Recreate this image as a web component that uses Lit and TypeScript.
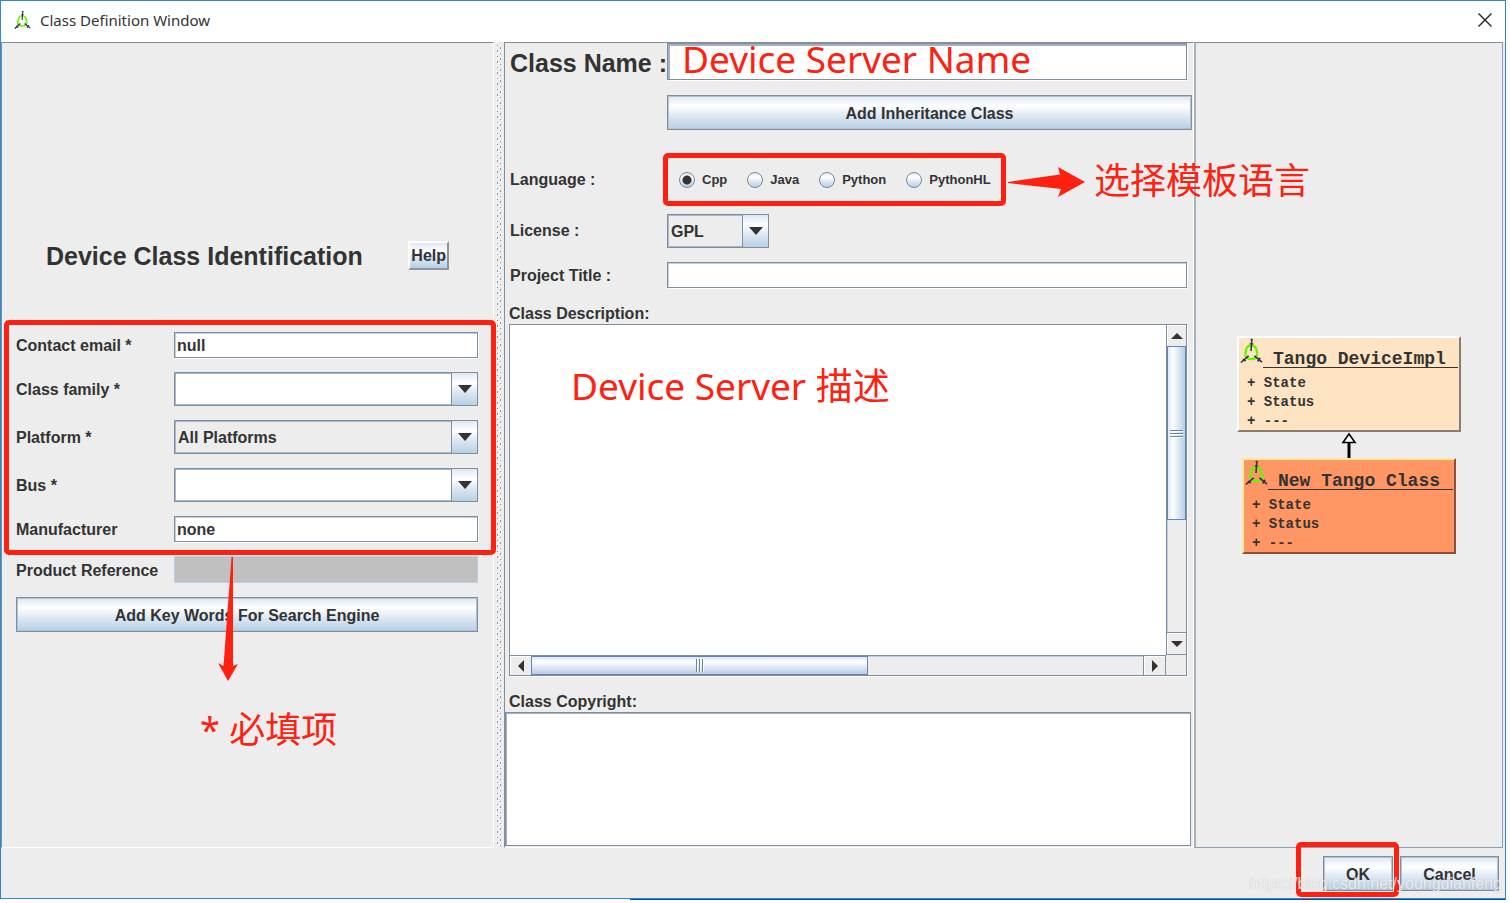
import { LitElement, html, css, svg } from "lit";
import { customElement, property } from "lit/decorators.js";

const tangoMark = svg`
  <path d="M5.5 16.5 C6 9.5 9 7 11.5 7 C14.5 7 17.5 9.5 18 15.5 C18 20 15 21.5 11.5 21.5 C8 21.5 5.5 20 5.5 16.5Z"
    fill="none" stroke="#66f505" stroke-width="2.4" />
  <path d="M11 1 L12.5 1 L12 5 L11.5 13" fill="none" stroke="#333344" stroke-width="1.6" />
  <path d="M10 5.5 H14" stroke="#333344" stroke-width="1" />
  <path d="M9 18 L1 25 M3 21.5 L6 23.5 M15 18 L23 24.5 M21 20 L18.5 24" fill="none" stroke="#3a2a4a" stroke-width="1.7" />`;

@customElement("tango-icon")
class TangoIcon extends LitElement {
  static styles = css`
    :host { display: block; }
    .mark { display: block; width: 100%; height: 100%; }
  `;
  render() {
    return html`<svg class="mark" viewBox="0 0 24 26" aria-hidden="true">${tangoMark}</svg>`;
  }
}

@customElement("combo-box")
class ComboBox extends LitElement {
  @property() name = "";
  @property() value = "";
  @property({ type: Boolean }) editable = false;

  static styles = css`
    :host { display: block; }
    .combo { position: relative; height: 34px; }
    .select {
      box-sizing: border-box;
      width: 100%;
      height: 100%;
      margin: 0;
      padding: 2px 30px 0 3px;
      appearance: none;
      border: 1px solid #7f8f9f;
      border-radius: 0;
      box-shadow: inset 0 0 0 1px #a3b8cc;
      background: #ededed;
      color: #333;
      font: bold 16px/20px "Liberation Sans", sans-serif;
      outline: none;
    }
    .editable { background: #fff; }
    .arrow {
      position: absolute;
      top: 1px;
      right: 1px;
      bottom: 1px;
      width: 25px;
      display: flex;
      align-items: center;
      justify-content: center;
      border-left: 1px solid #7f8f9f;
      background: linear-gradient(#dde8f3, #fff 30%, #dde8f3 60%, #b8cfe5);
      pointer-events: none;
    }
  `;
  render() {
    return html`<div class="combo">
      <select class="select ${this.editable ? "editable" : ""}" aria-label=${this.name}>
        <option>${this.value}</option>
      </select>
      <span class="arrow"><svg width="14" height="8" viewBox="0 0 14 8"><path d="M0 0H14L7 8Z" fill="#333" /></svg></span>
    </div>`;
  }
}

@customElement("class-card")
class ClassCard extends LitElement {
  @property() name = "";
  @property({ type: Boolean }) fresh = false;

  static styles = css`
    :host { display: block; }
    .card {
      box-sizing: border-box;
      height: 96px;
      padding: 0 1px 0 1px;
      border: 2px solid;
      border-color: #fff #8a7c70 #8a7c70 #fff;
      background: #ffe4c4;
      color: #333;
      font: bold 14px/19px "Liberation Mono", monospace;
    }
    .fresh { background: #ff9664; border-color: #ffe9a0 #8c5238 #8c5238 #ffe9a0; }
    .head { display: flex; align-items: flex-end; height: 30px; }
    .icon { width: 23px; height: 26px; align-self: flex-start; }
    .name {
      flex: 1;
      margin: 0;
      padding: 0 10px;
      border-bottom: 1px solid #333;
      font: bold 18px/16px "Liberation Mono", monospace;
      white-space: nowrap;
    }
    .list { margin: 6px 0 0; padding: 0 0 0 7px; list-style: none; }
  `;
  render() {
    return html`<article class="card ${this.fresh ? "fresh" : ""}">
      <div class="head"><tango-icon class="icon"></tango-icon><h3 class="name">${this.name}</h3></div>
      <ul class="list"><li>+ State</li><li>+ Status</li><li>+ ---</li></ul>
    </article>`;
  }
}

@customElement("app-root")
class AppRoot extends LitElement {
  static styles = css`
    :host {
      display: block;
      color: #333;
      font: bold 16px/20px "Liberation Sans", Arial, sans-serif;
    }
    .page {
      box-sizing: border-box;
      display: flex;
      flex-direction: column;
      min-height: 100vh;
      padding: 0 4px 4px 0;
      background: linear-gradient(#0b4f94, #0b4f94) right 4px bottom 3px / 58% 1px no-repeat #fff;
      overflow: hidden;
    }
    .window {
      flex: 1;
      display: flex;
      flex-direction: column;
      border: 1px solid #2b87d8;
      background: #ededed;
    }
    .titlebar {
      box-sizing: border-box;
      display: flex;
      align-items: center;
      height: 41px;
      padding: 0 13px 3px;
      background: #fff;
    }
    .app-icon { width: 17px; height: 20px; margin-right: 9px; }
    .caption { flex: 1; margin: 0; font: 15px/20px "Noto Sans", sans-serif; }
    .close { display: block; padding: 0; border: 0; background: none; line-height: 0; }
    .body {
      flex: 1;
      display: grid;
      grid-template-columns: minmax(0, 493fr) 10px minmax(0, 690fr) minmax(0, 311fr);
    }
    .pane {
      box-sizing: border-box;
      border: 1px solid;
      border-color: #7f8f9f #fff #fff #7f8f9f;
    }

    .identity { padding: 198px 15px 0 14px; }
    .heading-row { display: flex; align-items: center; height: 29px; margin-bottom: 62px; padding: 0 29px 0 30px; }
    .heading { flex: 1; margin: 0; font-size: 25px; line-height: 30px; white-space: nowrap; }
    .button {
      box-sizing: border-box;
      height: 35px;
      margin: 0;
      padding: 2px 4px 0;
      border: 1px solid #7f8f9f;
      border-radius: 0;
      box-shadow: inset 0 0 0 1px #b4c3d2;
      background: linear-gradient(#dde8f3, #fff 30%, #dde8f3 60%, #b8cfe5);
      color: #333;
      font: inherit;
    }
    .help {
      height: 29px;
      padding: 0 1px;
      border: 2px solid;
      border-color: #fff #8c96a0 #8c96a0 #fff;
      box-shadow: none;
    }
    .required, .optional {
      display: grid;
      grid-template-columns: 158px minmax(0, 1fr);
      align-items: center;
      row-gap: 14px;
    }
    .label { padding-top: 2px; }
    .required { position: relative; }
    .optional { margin: 14px 0; }
    .input {
      box-sizing: border-box;
      width: 100%;
      height: 26px;
      margin: 0;
      padding: 2px 2px 0;
      border: 1px solid #7f8f9f;
      border-radius: 0;
      box-shadow: 1px 1px 0 #fff, inset 1px 1px 0 #c5cfd9;
      background: #fff;
      color: #333;
      font: inherit;
      outline: none;
    }
    .disabled { height: 27px; border-color: #b8cfe5; box-shadow: none; background: #c0c0c0; }
    .wide { width: 100%; }

    .frame {
      position: absolute;
      box-sizing: border-box;
      border: 5px solid #ff2010;
      border-radius: 5px;
      pointer-events: none;
    }
    .frame-required { inset: -12px -18px -13px -12px; }
    .note {
      position: absolute;
      margin: 0;
      color: #ff2010;
      font: 36px/48px "Noto Sans", "Noto Sans CJK SC", sans-serif;
      white-space: nowrap;
      pointer-events: none;
    }
    .pointer { position: absolute; display: block; pointer-events: none; }
    .pointer-down { top: 225px; left: 202px; }
    .note-required { top: 374px; left: 184px; }

    .splitter { display: block; width: 10px; height: 100%; }

    .definition { display: flex; flex-direction: column; padding-bottom: 1px; }
    .fields {
      display: grid;
      grid-template-columns: 157px minmax(0, 1fr);
      align-items: center;
      padding: 0 1px 0 5px;
    }
    .class-label { font-size: 25px; line-height: 30px; white-space: nowrap; }
    .field { position: relative; padding-right: 5px; }
    .class-input { height: 37px; box-shadow: 1px 1px 0 #fff, inset 2px 2px 0 #a5b1bd; }
    .note-name, .note-description { font-size: 37px; }
    .note-name { top: -8px; left: 15px; }
    .inherit { grid-column: 2; margin: 15px 0 23px; }
    .languages {
      position: relative;
      justify-self: start;
      display: flex;
      align-items: center;
      gap: 20px;
      height: 53px;
      margin: 0;
      padding: 0 15px 0 12px;
      border: 0;
      font-size: 13px;
    }
    .frame-language { inset: 0 0 0 -4px; }
    .choice { display: flex; align-items: center; gap: 7px; }
    .radio {
      appearance: none;
      box-sizing: border-box;
      width: 16px;
      height: 16px;
      margin: 0;
      border: 1px solid #7a8a99;
      border-radius: 50%;
      background: linear-gradient(#dde8f3, #fff 30%, #dde8f3 60%, #b8cfe5);
    }
    .radio:checked {
      background: radial-gradient(circle, #333 4px, transparent 5px), linear-gradient(#dde8f3, #fff 30%, #dde8f3 60%, #b8cfe5);
    }
    .pointer-right { top: 14px; left: 341px; }
    .note-language { top: 4px; left: 427px; }
    .license-label, .license { margin: 8px 0 14px; }
    .license { width: 102px; }
    .area-label { display: block; margin: 16px 0 0 4px; }

    .scroll {
      position: relative;
      flex: 1;
      display: grid;
      grid-template: minmax(0, 1fr) 20px / minmax(0, 1fr) 20px;
      margin: 0 6px 0 4px;
      border: 1px solid #7f8f9f;
      box-shadow: 1px 1px 0 #fff;
    }
    .text {
      display: block;
      box-sizing: border-box;
      width: 100%;
      height: 100%;
      margin: 0;
      padding: 2px;
      border: 0;
      background: #fff;
      color: #333;
      font: inherit;
      resize: none;
      outline: none;
    }
    .note-description { top: 37px; left: 61px; }
    .vbar, .hbar { display: flex; min-width: 0; }
    .vbar { flex-direction: column; border-left: 1px solid #7f8f9f; border-bottom: 1px solid #7f8f9f; }
    .hbar { border-top: 1px solid #7f8f9f; border-right: 1px solid #7f8f9f; }
    .step {
      flex: none;
      display: flex;
      align-items: center;
      justify-content: center;
      width: 21px;
      height: 21px;
      padding: 0;
      border: 0;
      background: #ededed;
      box-shadow: inset 1px 1px 0 #fff;
    }
    .vbar .step { width: 100%; }
    .hbar .step { height: 100%; }
    .track { flex: 1; box-shadow: inset 1px 1px 0 #b8cfe5; }
    .vbar .track { border-bottom: 1px solid #7f8f9f; }
    .hbar .track { border-right: 1px solid #7f8f9f; }
    .thumb {
      box-sizing: border-box;
      display: flex;
      align-items: center;
      justify-content: center;
      border: 1px solid #6382bf;
    }
    .vbar .thumb {
      height: 61%;
      background: linear-gradient(90deg, #dde8f3, #fff 30%, #dde8f3 60%, #b8cfe5);
    }
    .hbar .thumb {
      width: 55%;
      height: 100%;
      background: linear-gradient(#dde8f3, #fff 30%, #dde8f3 60%, #b8cfe5);
    }
    .copyright {
      height: 134px;
      border: 1px solid #7f8f9f;
      box-shadow: inset 1px 1px 0 #a5b1bd;
    }
    .copyright-wrap { padding-right: 2px; }

    .diagram {
      display: flex;
      flex-direction: column;
      align-items: center;
      justify-content: center;
      margin-right: 2px;
      border-color: #7f8f9f #8fa0b0 #8fa0b0 #a5b1bd;
      border-left-width: 2px;
    }
    .base { width: 224px; }
    .derived { width: 214px; }
    .inherits { display: block; }

    .footer {
      display: flex;
      justify-content: flex-end;
      gap: 7px;
      height: 35px;
      padding: 8px 6px 7px;
      position: relative;
    }
    .action { position: relative; display: flex; }
    .ok { width: 70px; }
    .cancel { width: 99px; }
    .frame-ok { inset: -14px -6px -6px -27px; }
    .watermark {
      position: absolute;
      right: 3px;
      bottom: 4px;
      margin: 0;
      color: rgba(255, 255, 255, 0.8);
      font: 16px/20px "Liberation Sans", sans-serif;
      text-shadow: 0 0 1px rgba(120, 120, 120, 0.5);
      pointer-events: none;
    }
  `;

  private languages = ["Cpp", "Java", "Python", "PythonHL"];

  private identityPane() {
    return html`<section class="pane identity">
      <div class="heading-row">
        <h2 class="heading">Device Class Identification</h2>
        <button class="button help">Help</button>
      </div>
      <div class="required">
        <label class="label" for="email">Contact email *</label><input id="email" class="input" .value=${"null"} />
        <span class="label">Class family *</span><combo-box name="Class family" editable></combo-box>
        <span class="label">Platform *</span><combo-box name="Platform" value="All Platforms"></combo-box>
        <span class="label">Bus *</span><combo-box name="Bus" editable></combo-box>
        <label class="label" for="maker">Manufacturer</label><input id="maker" class="input" .value=${"none"} />
        <div class="frame frame-required"></div>
        <svg class="pointer pointer-down" width="22" height="124" viewBox="0 0 22 124">
          <path d="M13.5 0 H15 V109 L20 107 L10 124 L0 106 L5.500 109Z" fill="#ff2010" />
        </svg>
        <p class="note note-required">* 必填项</p>
      </div>
      <div class="optional">
        <label class="label" for="product">Product Reference</label><input id="product" class="input disabled" disabled />
      </div>
      <button class="button wide">Add Key Words For Search Engine</button>
    </section>`;
  }

  private descriptionArea() {
    return html`<div class="scroll">
      <textarea id="description" class="text"></textarea>
      <div class="vbar">
        <button class="step" aria-label="Scroll up"><svg width="12" height="6"><path d="M6 0L12 6H0Z" fill="#333" /></svg></button>
        <div class="track"><div class="thumb">
          <svg width="13" height="9"><path d="M0 1.500H13M0 4.500H13M0 7.500H13" stroke="#6382bf" /><path d="M0 2.500H13M0 5.500H13M0 8.500H13" stroke="#fff" /></svg>
        </div></div>
        <button class="step" aria-label="Scroll down"><svg width="12" height="6"><path d="M0 0H12L6 6Z" fill="#333" /></svg></button>
      </div>
      <div class="hbar">
        <button class="step" aria-label="Scroll left"><svg width="6" height="12"><path d="M6 0V12L0 6Z" fill="#333" /></svg></button>
        <div class="track"><div class="thumb">
          <svg width="9" height="13"><path d="M1.500 0V13M4.500 0V13M7.500 0V13" stroke="#6382bf" /><path d="M2.500 0V13M5.500 0V13M8.500 0V13" stroke="#fff" /></svg>
        </div></div>
        <button class="step" aria-label="Scroll right"><svg width="6" height="12"><path d="M0 0V12L6 6Z" fill="#333" /></svg></button>
      </div>
      <p class="note note-description">Device Server 描述</p>
    </div>`;
  }

  private definitionPane() {
    return html`<section class="pane definition">
      <div class="fields">
        <label class="class-label label" for="class-name">Class Name :</label>
        <div class="field">
          <input id="class-name" class="input class-input" />
          <p class="note note-name">Device Server Name</p>
        </div>
        <button class="button inherit">Add Inheritance Class</button>
        <span>Language :</span>
        <fieldset class="languages" aria-label="Language">
          ${this.languages.map(
            (name, i) => html`<label class="choice"><input class="radio" type="radio" name="language" ?checked=${i === 0} />${name}</label>`
          )}
          <div class="frame frame-language"></div>
          <svg class="pointer pointer-right" width="78" height="30" viewBox="0 0 78 30">
            <path d="M0 15 L52 7.500 L50 0 L77 15 L50 30 L53 22 L0 16Z" fill="#ff2010" />
          </svg>
          <p class="note note-language">选择模板语言</p>
        </fieldset>
        <span class="license-label">License :</span><combo-box class="license" name="License" value="GPL"></combo-box>
        <label class="label" for="project">Project Title :</label>
        <div class="field"><input id="project" class="input" /></div>
      </div>
      <label class="area-label" for="description">Class Description:</label>
      ${this.descriptionArea()}
      <label class="area-label" for="copyright">Class Copyright:</label>
      <div class="copyright-wrap"><textarea id="copyright" class="text copyright"></textarea></div>
    </section>`;
  }

  render() {
    return html`<main class="page">
      <div class="window">
        <header class="titlebar">
          <tango-icon class="app-icon"></tango-icon>
          <h1 class="caption">Class Definition Window</h1>
          <button class="close" aria-label="Close">
            <svg width="14" height="14" viewBox="0 0 14 14"><path d="M.5.5L13.500 13.500M13.500.5L.5 13.500" stroke="#222" stroke-width="1.400" /></svg>
          </button>
        </header>
        <div class="body">
          ${this.identityPane()}
          <svg class="splitter" aria-hidden="true">
            <defs>
              <pattern id="bumps" width="10" height="11" patternUnits="userSpaceOnUse">
                <path d="M3 3h1v1h-1zM6 5h1v2h-1zM3 8h1v2h-1zM6 0h1v1h-1z" fill="#8c9aa8" />
                <path d="M2 2h1v1h-1zM5 4h1v1h-1zM2 7h1v1h-1zM5 10h1v1h-1z" fill="#fff" />
              </pattern>
            </defs>
            <rect y="2" width="10" height="100%" fill="url(#bumps)" />
          </svg>
          ${this.definitionPane()}
          <section class="pane diagram">
            <class-card class="base" name="Tango DeviceImpl"></class-card>
            <svg class="inherits" width="16" height="26" viewBox="0 0 16 26">
              <path d="M8 10V26" stroke="#000" stroke-width="3" /><path d="M8 2L14 10.500H2Z" fill="#fff" stroke="#000" stroke-width="1.600" />
            </svg>
            <class-card class="derived" name="New Tango Class" fresh></class-card>
          </section>
        </div>
        <footer class="footer">
          <div class="action"><button class="button ok">OK</button><div class="frame frame-ok"></div></div>
          <button class="button cancel">Cancel</button>
          <p class="watermark">https://blog.csdn.net/youngdianfeng</p>
        </footer>
      </div>
    </main>`;
  }
}
